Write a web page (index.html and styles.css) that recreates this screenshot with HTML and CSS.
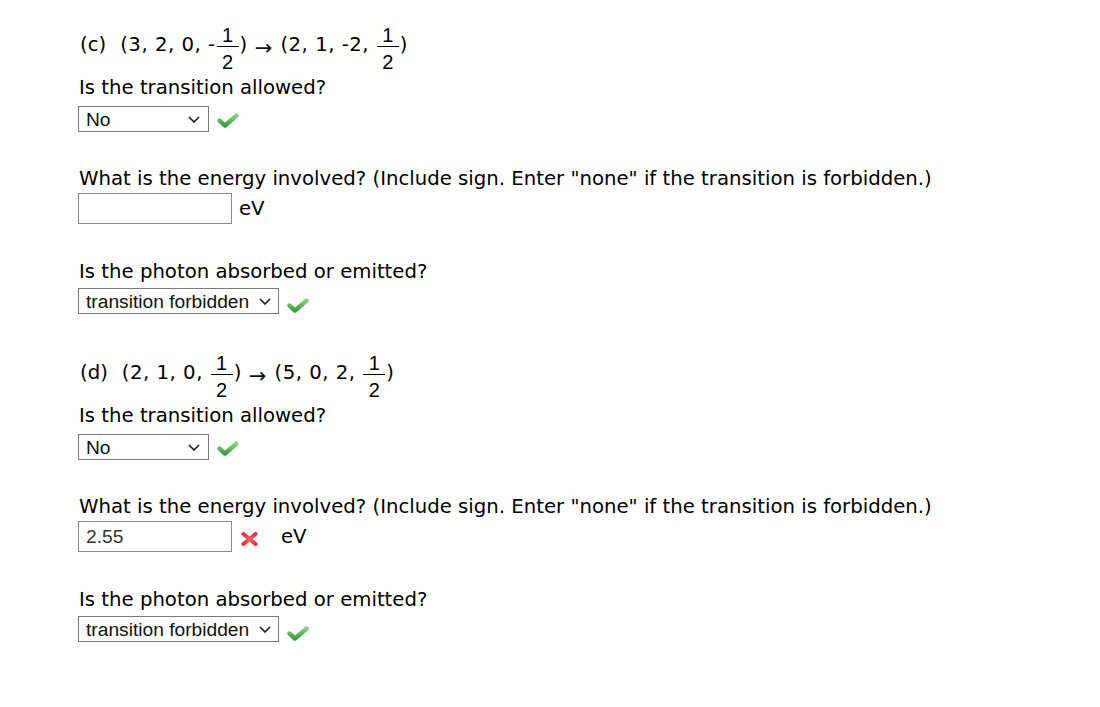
FILE: index.html
```html
<!DOCTYPE html>
<html>
<head>
<meta charset="utf-8">
<link rel="stylesheet" href="styles.css">
</head>
<body>
<svg class="defs" width="0" height="0" aria-hidden="true"><defs><linearGradient id="g1" x1="0" y1="0" x2="0" y2="1"><stop offset="0" stop-color="#86d47a"/><stop offset="1" stop-color="#3d9a43"/></linearGradient><radialGradient id="g2" cx="0.5" cy="0.5" r="0.6"><stop offset="0" stop-color="#f0666a"/><stop offset="1" stop-color="#e03c42"/></radialGradient></defs></svg>
<div class="page">
  <section class="part">
    <div class="eq"><span class="lbl">(c)</span><span class="tuple">(3, 2, 0, -<span class="frac"><span class="num">1</span><span class="den">2</span></span><span class="rp">)</span></span><span class="arrow">→</span><span class="tuple">(2, 1, -2, <span class="frac"><span class="num">1</span><span class="den">2</span></span><span class="rp">)</span></span></div>
    <p class="q q1">Is the transition allowed?</p>
    <div class="row r1"><div class="select sel-short"><span>No</span><svg class="chev" viewBox="0 0 12 7"><path d="M1 1 L6 6 L11 1" fill="none" stroke="#222" stroke-width="1.7"/></svg></div><svg class="check ck-short" viewBox="0 0 22 15"><path d="M2.5 7.5 L8 12.5 L19.5 2.5" fill="none" stroke="url(#g1)" stroke-width="4.4" stroke-linecap="round" stroke-linejoin="round"/></svg></div>
    <p class="q q2">What is the energy involved? (Include sign. Enter "none" if the transition is forbidden.)</p>
    <div class="row r2"><div class="input"></div><span class="unit">eV</span></div>
    <p class="q q3">Is the photon absorbed or emitted?</p>
    <div class="row r3"><div class="select sel-long"><span>transition forbidden</span><svg class="chev" viewBox="0 0 12 7"><path d="M1 1 L6 6 L11 1" fill="none" stroke="#222" stroke-width="1.7"/></svg></div><svg class="check ck-long" viewBox="0 0 22 15"><path d="M2.5 7.5 L8 12.5 L19.5 2.5" fill="none" stroke="url(#g1)" stroke-width="4.4" stroke-linecap="round" stroke-linejoin="round"/></svg></div>
  </section>
  <section class="part part-d">
    <div class="eq"><span class="lbl">(d)</span><span class="tuple">(2, 1, 0, <span class="frac"><span class="num">1</span><span class="den">2</span></span><span class="rp">)</span></span><span class="arrow">→</span><span class="tuple">(5, 0, 2, <span class="frac"><span class="num">1</span><span class="den">2</span></span><span class="rp">)</span></span></div>
    <p class="q q1">Is the transition allowed?</p>
    <div class="row r1"><div class="select sel-short"><span>No</span><svg class="chev" viewBox="0 0 12 7"><path d="M1 1 L6 6 L11 1" fill="none" stroke="#222" stroke-width="1.7"/></svg></div><svg class="check ck-short" viewBox="0 0 22 15"><path d="M2.5 7.5 L8 12.5 L19.5 2.5" fill="none" stroke="url(#g1)" stroke-width="4.4" stroke-linecap="round" stroke-linejoin="round"/></svg></div>
    <p class="q q2">What is the energy involved? (Include sign. Enter "none" if the transition is forbidden.)</p>
    <div class="row r2"><div class="input"><span>2.55</span></div><svg class="cross" viewBox="0 0 19 16"><path d="M3.5 3 L15.5 13 M15.5 3 L3.5 13" fill="none" stroke="url(#g2)" stroke-width="4.2" stroke-linecap="round"/></svg><span class="unit unit-x">eV</span></div>
    <p class="q q3">Is the photon absorbed or emitted?</p>
    <div class="row r3"><div class="select sel-long"><span>transition forbidden</span><svg class="chev" viewBox="0 0 12 7"><path d="M1 1 L6 6 L11 1" fill="none" stroke="#222" stroke-width="1.7"/></svg></div><svg class="check ck-long" viewBox="0 0 22 15"><path d="M2.5 7.5 L8 12.5 L19.5 2.5" fill="none" stroke="url(#g1)" stroke-width="4.4" stroke-linecap="round" stroke-linejoin="round"/></svg></div>
  </section>
</div>
</body>
</html>
```
FILE: styles.css
```css
html, body {
  margin: 0;
  padding: 0;
  background: #fff;
}
body {
  font-family: "DejaVu Sans", Verdana, sans-serif;
  font-size: 19.7px;
  line-height: 23px;
  color: #000;
}
.defs {
  position: absolute;
  width: 0;
  height: 0;
}
.page {
  padding: 17px 0 0 78px;
}
.part-d {
  margin-top: 31px;
}
.eq {
  display: flex;
  align-items: center;
  white-space: pre;
  padding-left: 2px;
}
.lbl {
  margin-right: 14px;
}
.tuple {
  display: inline-flex;
  align-items: center;
  letter-spacing: 0.5px;
}
.frac {
  display: inline-flex;
  flex-direction: column;
  align-items: stretch;
  font-family: "Liberation Sans", Arial, sans-serif;
  font-size: 20px;
  line-height: 18px;
  letter-spacing: 0;
  width: 22px;
  margin-left: 1px;
  text-align: center;
  padding-top: 9px;
}
.num {
  border-bottom: 1px solid #000;
  padding-bottom: 2px;
}
.den {
  padding-top: 6px;
}
.rp {
  margin-left: 1px;
}
.arrow {
  font-size: 21px;
  margin: 0 8px 0 7px;
  padding-top: 8px;
  color: #111;
}
.q {
  margin: 0;
  padding-left: 1px;
}
.q1 {
  margin-top: 5px;
}
.q2 {
  margin-top: 35px;
}
.q3 {
  margin-top: 36px;
}
.row {
  display: flex;
  align-items: flex-start;
}
.r1 {
  margin-top: 7px;
}
.r2 {
  margin-top: 3px;
  align-items: center;
}
.r3 {
  margin-top: 5px;
}
.select {
  box-sizing: border-box;
  display: flex;
  align-items: center;
  justify-content: space-between;
  height: 26px;
  border: 1px solid #7a7a7a;
  background: #fff;
  font-family: "Liberation Sans", Arial, sans-serif;
  font-size: 19.2px;
  color: #111;
  padding: 0 8px 0 7px;
}
.sel-short {
  width: 131px;
}
.sel-long {
  width: 201px;
  padding-right: 7px;
}
.chev {
  width: 12px;
  height: 7px;
}
.check {
  width: 22px;
  height: 15px;
  margin-left: 8px;
}
.ck-short {
  margin-top: 7px;
}
.ck-long {
  margin-top: 10px;
}
.input {
  box-sizing: border-box;
  width: 154px;
  height: 31px;
  border: 1px solid #8a8a8a;
  display: flex;
  align-items: center;
  padding-left: 7px;
  font-family: "Liberation Sans", Arial, sans-serif;
  font-size: 19.2px;
  color: #333;
}
.unit {
  margin-left: 7px;
}
.cross {
  width: 19px;
  height: 16px;
  margin-left: 8px;
  margin-top: 4px;
}
.unit-x {
  margin-left: 22px;
}
```
